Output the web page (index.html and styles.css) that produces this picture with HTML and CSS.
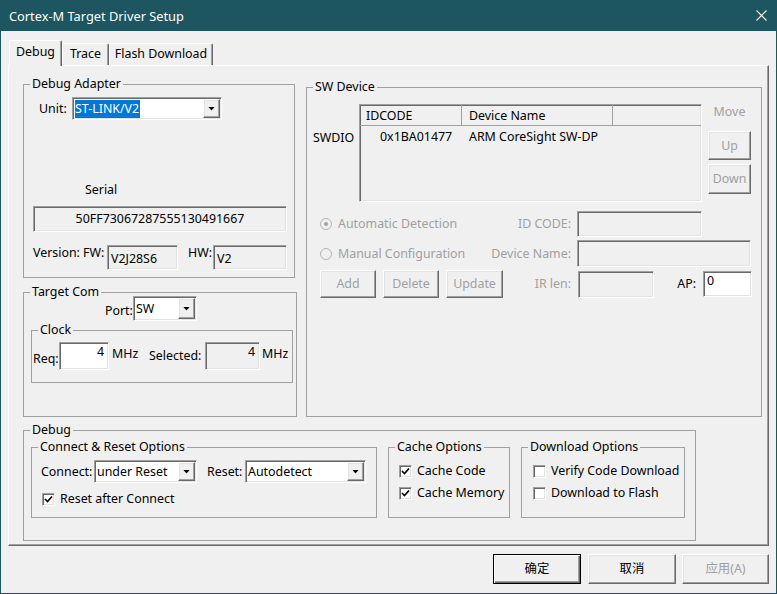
FILE: index.html
```html
<!DOCTYPE html>
<html lang="en">
  <head>
    <meta charset="UTF-8">
    <title>Cortex-M Target Driver Setup</title>
    <link rel="stylesheet" href="styles.css">
  </head>
  <body>
    <div class="window">
      <div class="titlebar">
        <span class="title">Cortex-M Target Driver Setup</span>
        <svg class="close" width="11" height="11" viewBox="0 0 11 11"><path d="M0.5 0.5L10.5 10.5M10.5 0.5L0.5 10.5" stroke="#fff" stroke-width="1.1" fill="none"/></svg>
      </div>

      <div class="client">
        <div class="tabs">
          <div class="tab active tab-debug">Debug</div>
          <div class="tab tab-trace">Trace</div>
          <div class="tab tab-flash">Flash Download</div>
        </div>

        <div class="panel">
          <div class="top-row">
            <div class="left-col">
              <fieldset class="group adapter">
                <legend>Debug Adapter</legend>
                <div class="unit-row">
                  <span class="unit-label">Unit:</span>
                  <div class="combo sunken unit-combo">
                    <span class="val"><span class="sel">ST-LINK/V2</span></span>
                    <span class="drop raised"></span>
                  </div>
                </div>
                <div class="serial-label">Serial</div>
                <div class="field sunken serial">50FF73067287555130491667</div>
                <div class="version-row">
                  <span class="fw-label">Version: FW:</span>
                  <div class="field sunken fw">V2J28S6</div>
                  <span class="hw-label">HW:</span>
                  <div class="field sunken hw">V2</div>
                </div>
              </fieldset>

              <fieldset class="group target">
                <legend>Target Com</legend>
                <div class="port-row">
                  <span class="port-label">Port:</span>
                  <div class="combo sunken port-combo">
                    <span class="val">SW</span>
                    <span class="drop raised"></span>
                  </div>
                </div>
                <fieldset class="group clock">
                  <legend>Clock</legend>
                  <div class="clock-row">
                    <span class="req-label">Req:</span>
                    <div class="field sunken white num req">4</div>
                    <span class="mhz">MHz</span>
                    <span class="sel-label">Selected:</span>
                    <div class="field sunken num selected">4</div>
                    <span class="mhz2">MHz</span>
                  </div>
                </fieldset>
              </fieldset>
            </div>

            <fieldset class="group sw">
              <legend>SW Device</legend>
              <div class="list-row">
                <span class="swdio">SWDIO</span>
                <div class="list sunken">
                  <div class="list-head">
                    <span class="col1">IDCODE</span>
                    <span class="col2">Device Name</span>
                    <span class="col3"></span>
                  </div>
                  <div class="list-item">
                    <span class="col1">0x1BA01477</span>
                    <span class="col2">ARM CoreSight SW-DP</span>
                  </div>
                </div>
                <div class="move-col">
                  <span class="disabled move">Move</span>
                  <div class="btn raised disabled up">Up</div>
                  <div class="btn raised disabled down">Down</div>
                </div>
              </div>

              <div class="sw-row row-a">
                <div class="opt disabled"><span class="radio on"></span>Automatic Detection</div>
                <span class="lbl disabled">ID CODE:</span>
                <div class="field sunken idcode"></div>
              </div>
              <div class="sw-row row-b">
                <div class="opt disabled"><span class="radio"></span>Manual Configuration</div>
                <span class="lbl disabled">Device Name:</span>
                <div class="field sunken devname"></div>
              </div>
              <div class="sw-row row-c">
                <div class="btn raised disabled add">Add</div>
                <div class="btn raised disabled del">Delete</div>
                <div class="btn raised disabled upd">Update</div>
                <span class="lbl disabled ir-label">IR len:</span>
                <div class="field sunken irlen"></div>
                <span class="lbl ap-label">AP:</span>
                <div class="field sunken white ap">0</div>
              </div>
            </fieldset>
          </div>

          <fieldset class="group debug">
            <legend>Debug</legend>
            <div class="opts-row">
              <fieldset class="group conn">
                <legend>Connect &amp; Reset Options</legend>
                <div class="conn-row">
                  <span class="connect-label">Connect:</span>
                  <div class="combo sunken connect-combo">
                    <span class="val">under Reset</span>
                    <span class="drop raised"></span>
                  </div>
                  <span class="reset-label">Reset:</span>
                  <div class="combo sunken reset-combo">
                    <span class="val">Autodetect</span>
                    <span class="drop raised"></span>
                  </div>
                </div>
                <div class="check-row first">
                  <span class="check sunken on"><svg width="9" height="9" viewBox="0 0 9 9"><path d="M1 4L3.5 6.5L8 1.5" stroke="#000" stroke-width="1.7" fill="none"/></svg></span>
                  Reset after Connect
                </div>
              </fieldset>

              <fieldset class="group cache">
                <legend>Cache Options</legend>
                <div class="check-row first">
                  <span class="check sunken on"><svg width="9" height="9" viewBox="0 0 9 9"><path d="M1 4L3.5 6.5L8 1.5" stroke="#000" stroke-width="1.7" fill="none"/></svg></span>
                  Cache Code
                </div>
                <div class="check-row">
                  <span class="check sunken on"><svg width="9" height="9" viewBox="0 0 9 9"><path d="M1 4L3.5 6.5L8 1.5" stroke="#000" stroke-width="1.7" fill="none"/></svg></span>
                  Cache Memory
                </div>
              </fieldset>

              <fieldset class="group download">
                <legend>Download Options</legend>
                <div class="check-row first">
                  <span class="check sunken"></span>
                  Verify Code Download
                </div>
                <div class="check-row">
                  <span class="check sunken"></span>
                  Download to Flash
                </div>
              </fieldset>
            </div>
          </fieldset>
        </div>

        <div class="dlg-buttons">
          <div class="btn raised default ok">确定</div>
          <div class="btn raised cancel">取消</div>
          <div class="btn raised disabled apply">应用(A)</div>
        </div>
      </div>
    </div>
  </body>
</html>
```

FILE: styles.css
```css
* {
    margin: 0;
    padding: 0;
    box-sizing: border-box;
}

body {
    font-family: "Noto Sans", "Noto Sans CJK SC", sans-serif;
    font-size: 12.4px;
    line-height: 16px;
    color: #000;
    background: #1d5560;
    width: 777px;
    height: 594px;
    overflow: hidden;
}

.window {
    width: 777px;
    height: 594px;
    background: #1d5560;
    display: flex;
    flex-direction: column;
}

.titlebar {
    height: 31px;
    flex: none;
    display: flex;
    align-items: center;
    justify-content: space-between;
    padding: 0 10px 0 9px;
    color: #fff;
}

.title {
    font-size: 12.8px;
}

.client {
    flex: 1;
    margin: 0 1px 1px;
    background: #f0f0f0;
}

/* 3D borders */
.sunken {
    border: 1px solid;
    border-color: #a0a0a0 #fff #fff #a0a0a0;
    box-shadow: inset 1px 1px 0 #696969, inset -1px -1px 0 #e3e3e3;
}

.raised {
    border: 1px solid;
    border-color: #fff #696969 #696969 #fff;
    box-shadow: inset -1px -1px 0 #a0a0a0, inset 1px 1px 0 #e3e3e3;
    background: #f0f0f0;
}

.disabled {
    color: #a0a0a0;
}

/* Tabs */
.tabs {
    display: flex;
    align-items: flex-end;
    height: 25px;
    margin-top: 9px;
    padding-left: 8px;
}

.tab {
    height: 22px;
    border: 1px solid;
    border-color: #fff #696969 transparent #fff;
    border-bottom: none;
    border-radius: 2px 2px 0 0;
    box-shadow: inset -1px 0 0 #a0a0a0;
    text-align: center;
    line-height: 20px;
    background: #f0f0f0;
    white-space: nowrap;
}

.tab.active {
    height: 26px;
    margin-bottom: -1px;
    line-height: 22px;
    position: relative;
    z-index: 1;
}

.tab-debug { width: 53px; }
.tab-trace { width: 47px; }
.tab-flash { width: 104px; }

.panel {
    margin-left: 7px;
    width: 761px;
    height: 481px;
    border: 1px solid;
    border-color: #fff #696969 #696969 #fff;
    box-shadow: inset -1px -1px 0 #a0a0a0;
    padding: 10px 0 0 14px;
}

/* Group boxes */
fieldset.group {
    border: 1px solid #a0a0a0;
    margin: 0;
    padding: 0;
    min-width: 0;
}

fieldset.group > legend {
    padding: 0 2px;
    margin-left: 6px;
    line-height: 16px;
}

.top-row {
    display: flex;
    align-items: flex-start;
}

.left-col {
    width: 274px;
    display: flex;
    flex-direction: column;
}

.adapter {
    width: 272px;
    height: 202px;
}

.target {
    width: 274px;
    height: 133px;
    margin-top: 6px !important;
}

.sw {
    width: 456px;
    height: 338px;
    margin: 3px 0 0 9px !important;
}

.debug {
    width: 673px;
    height: 119px;
    margin-top: 5px !important;
}

/* Fields and combos */
.field {
    background: #f0f0f0;
    padding: 2px 3px;
    white-space: nowrap;
}

.field.white {
    background: #fff;
}

.field.num {
    text-align: right;
    padding: 1px 4px 0 0;
}

.combo {
    display: flex;
    align-items: center;
    background: #fff;
    padding: 1px;
}

.combo .val {
    flex: 1;
    padding-left: 1px;
    white-space: nowrap;
}

.combo .drop {
    width: 17px;
    align-self: stretch;
    display: flex;
    align-items: center;
    justify-content: center;
}

.combo .drop::after {
    content: "";
    width: 7px;
    height: 4px;
    background: #000;
    clip-path: polygon(0 0, 100% 0, 50% 100%);
}

.sel {
    background: #0078d7;
    color: #fff;
    padding: 0 1px 1px 0;
}

/* Debug Adapter */
.unit-row {
    display: flex;
    align-items: center;
    margin-top: 5px;
    padding-left: 15px;
}

.unit-label { width: 33px; }

.unit-combo {
    width: 150px;
    height: 23px;
}

.serial-label {
    margin-top: 62px;
    padding-left: 61px;
}

.serial {
    margin: 8px 0 0 9px;
    width: 254px;
    height: 26px;
    text-align: center;
    padding-top: 4px;
}

.version-row {
    display: flex;
    align-items: flex-start;
    margin: 13px 0 0 9px;
}

.fw-label {
    width: 74px;
    white-space: nowrap;
}

.fw {
    width: 71px;
    height: 25px;
    padding-top: 5px;
}

.hw-label {
    width: 25px;
    margin-left: 10px;
}

.hw {
    width: 74px;
    height: 25px;
    padding-top: 5px;
}

/* Target Com */
.port-row {
    display: flex;
    margin-top: -4px;
    padding-left: 81px;
}

.port-label {
    width: 28px;
    align-self: flex-end;
    margin-bottom: 2px;
}

.port-combo {
    width: 64px;
    height: 25px;
}

.clock {
    width: 262px;
    height: 61px;
    margin: 1px 0 0 7px !important;
}

.clock-row {
    display: flex;
    align-items: flex-start;
    margin-top: 4px;
}

.req-label {
    width: 26px;
    margin: 9px 0 0 1px;
}

.req {
    width: 50px;
    height: 28px;
}

.mhz {
    width: 37px;
    margin: 4px 0 0 3px;
}

.sel-label {
    width: 56px;
    margin-top: 6px;
}

.selected {
    width: 55px;
    height: 28px;
}

.mhz2 {
    margin: 4px 0 0 2px;
}

/* SW Device */
.list-row {
    display: flex;
    align-items: flex-start;
    margin-top: 9px;
}

.swdio {
    width: 46px;
    margin: 26px 0 0 6px;
}

.list {
    width: 343px;
    height: 98px;
    background: #f0f0f0;
}

.list-head {
    display: flex;
    height: 21px;
    border-bottom: 1px solid #a0a0a0;
    line-height: 21px;
}

.list-head .col1 {
    width: 102px;
    padding-left: 6px;
    border-right: 1px solid #a0a0a0;
}

.list-head .col2 {
    width: 151px;
    padding-left: 7px;
    border-right: 1px solid #a0a0a0;
}

.list-item {
    display: flex;
    margin-top: 3px;
    white-space: nowrap;
}

.list-item .col1 {
    width: 102px;
    padding-left: 20px;
}

.list-item .col2 {
    padding-left: 7px;
}

.move-col {
    width: 43px;
    margin-left: 6px;
    display: flex;
    flex-direction: column;
}

.move {
    text-align: center;
}

.btn {
    display: flex;
    align-items: center;
    justify-content: center;
}

.up {
    margin-top: 11px;
    height: 29px;
}

.down {
    margin-top: 4px;
    height: 30px;
}

.sw-row {
    display: flex;
    align-items: center;
    padding-left: 13px;
}

.row-a { margin-top: 9px; }
.row-b { margin-top: 3px; }
.row-c { margin-top: 3px; }

.opt {
    width: 160px;
    display: flex;
    align-items: center;
    white-space: nowrap;
}

.radio {
    width: 12px;
    height: 12px;
    border-radius: 50%;
    border: 1px solid #b4b4b4;
    background: #f0f0f0;
    margin-right: 6px;
    display: flex;
    align-items: center;
    justify-content: center;
}

.radio.on::after {
    content: "";
    width: 4px;
    height: 4px;
    border-radius: 50%;
    background: #a0a0a0;
}

.lbl {
    width: 97px;
    text-align: right;
    padding-right: 6px;
    white-space: nowrap;
}

.idcode {
    width: 125px;
    height: 26px;
}

.devname {
    width: 174px;
    height: 27px;
}

.add, .del, .upd {
    height: 28px;
}

.add { width: 56px; }

.del {
    width: 56px;
    margin-left: 7px;
}

.upd {
    width: 57px;
    margin-left: 7px;
}

.ir-label {
    width: 75px;
    padding-right: 7px;
}

.irlen {
    width: 76px;
    height: 27px;
}

.ap-label {
    width: 49px;
    padding-right: 7px;
}

.ap {
    width: 49px;
    height: 26px;
    padding: 1px 3px;
}

/* Debug options */
.opts-row {
    display: flex;
    margin: 1px 0 0 7px;
}

.conn {
    width: 346px;
    height: 79px;
}

.cache {
    width: 122px;
    height: 79px;
    margin-left: 11px !important;
}

.download {
    width: 164px;
    height: 79px;
    margin-left: 11px !important;
}

.conn-row {
    display: flex;
    align-items: center;
    margin-top: 5px;
    padding-left: 9px;
}

.connect-label { width: 53px; }

.connect-combo {
    width: 103px;
    height: 23px;
}

.reset-label {
    width: 38px;
    margin-left: 10px;
}

.reset-combo {
    width: 121px;
    height: 23px;
}

.check-row {
    display: flex;
    align-items: center;
    margin-top: 6px;
    padding-left: 10px;
    white-space: nowrap;
}

.check-row.first {
    margin-top: 8px;
}

.download .check-row {
    padding-left: 11px;
}

.check {
    width: 13px;
    height: 13px;
    background: #fff;
    margin-right: 5px;
    display: flex;
    align-items: center;
    justify-content: center;
}

/* Dialog buttons */
.dlg-buttons {
    display: flex;
    justify-content: flex-end;
    margin-top: 8px;
    padding-right: 7px;
}

.dlg-buttons .btn {
    height: 30px;
}

.ok { width: 88px; }

.default {
    border: 1px solid #000;
    box-shadow: inset 1px 1px 0 #fff, inset -1px -1px 0 #696969, inset -2px -2px 0 #a0a0a0;
}

.cancel {
    width: 88px;
    margin-left: 7px;
}

.apply {
    width: 87px;
    margin-left: 6px;
}
```
